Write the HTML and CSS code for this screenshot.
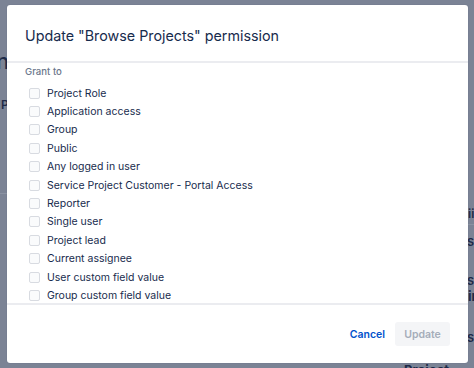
FILE: index.html
```html
<!DOCTYPE html>
<html lang="en">
<head>
<meta charset="utf-8">
<title>Update permission</title>
<link rel="stylesheet" href="styles.css">
</head>
<body>
<div class="backdrop">
  <span class="bg-text bg-n">n</span>
  <span class="bg-text bg-p">P</span>
  <span class="bg-text bg-r1">ii</span>
  <span class="bg-text bg-r2">s</span>
  <span class="bg-text bg-r3">s</span>
  <span class="bg-text bg-r4">in</span>
  <span class="bg-text bg-r5">s</span>
  <span class="bg-text bg-role">Project Role</span>
  <span class="bg-line bg-line-l"></span>
  <span class="bg-line bg-line-r"></span>
</div>
<div class="modal">
  <header class="modal-header">
    <h1 class="modal-title">Update "Browse Projects" permission</h1>
  </header>
  <div class="modal-body">
    <div class="group-label">Grant to</div>
    <ul class="options">
      <li class="option"><span class="checkbox"></span><span>Project Role</span></li>
      <li class="option"><span class="checkbox"></span><span>Application access</span></li>
      <li class="option"><span class="checkbox"></span><span>Group</span></li>
      <li class="option"><span class="checkbox"></span><span>Public</span></li>
      <li class="option"><span class="checkbox"></span><span>Any logged in user</span></li>
      <li class="option"><span class="checkbox"></span><span>Service Project Customer - Portal Access</span></li>
      <li class="option"><span class="checkbox"></span><span>Reporter</span></li>
      <li class="option"><span class="checkbox"></span><span>Single user</span></li>
      <li class="option"><span class="checkbox"></span><span>Project lead</span></li>
      <li class="option"><span class="checkbox"></span><span>Current assignee</span></li>
      <li class="option"><span class="checkbox"></span><span>User custom field value</span></li>
      <li class="option"><span class="checkbox"></span><span>Group custom field value</span></li>
      <li class="option"><span class="checkbox"></span><span>Project role</span></li>
    </ul>
  </div>
  <footer class="modal-footer">
    <button class="btn btn-link">Cancel</button>
    <button class="btn btn-disabled" disabled>Update</button>
  </footer>
</div>
</body>
</html>
```
FILE: styles.css
```css
* { box-sizing: border-box; }
html, body {
  margin: 0;
  height: 368px;
  overflow: hidden;
}
body {
  background: #7b8395;
  font-family: "Inter", "Noto Sans", sans-serif;
  color: #172b4d;
  position: relative;
}
.backdrop {
  position: absolute;
  inset: 0;
  overflow: hidden;
}
.bg-text {
  position: absolute;
  color: #1e2a48;
  font-weight: 600;
  font-size: 13px;
  line-height: 1;
}
.bg-n { left: -4px; top: 50px; font-size: 22px; font-weight: 500; }
.bg-p { left: 1px; top: 99px; font-size: 12px; }
.bg-r1 { left: 468px; top: 208px; font-size: 12px; }
.bg-r2 { left: 467px; top: 235px; }
.bg-r3 { left: 467px; top: 274px; }
.bg-r4 { left: 468px; top: 290px; font-weight: 700; }
.bg-r5 { left: 467px; top: 331px; }
.bg-role { left: 404px; top: 364px; font-size: 13px; font-weight: 700; }
.bg-line { position: absolute; height: 1px; background: #8a92a2; }
.bg-line-l { left: 0; width: 7px; top: 193px; }
.bg-line-r { left: 468px; width: 6px; top: 224px; }

.modal {
  position: absolute;
  left: 7px;
  top: 5px;
  width: 461px;
  height: 358px;
  background: #fff;
  border-radius: 3px;
  display: flex;
  flex-direction: column;
  box-shadow: 0 0 1px rgba(9,30,66,0.3);
}
.modal-header {
  height: 58px;
  padding: 0 18px;
  display: flex;
  align-items: center;
  border-bottom: 2px solid #ebecf0;
  flex: none;
}
.modal-title {
  margin: 4px 0 0;
  font-size: 14.3px;
  font-weight: 400;
  color: #172b4d;
}
.modal-body {
  flex: 1;
  overflow: hidden;
  padding: 2px 18px 0;
}
.group-label {
  font-size: 9.6px;
  font-weight: 500;
  color: #6b778c;
  line-height: 13px;
  margin-bottom: 6px;
}
.options {
  list-style: none;
  margin: 0;
  padding: 0;
}
.option {
  display: flex;
  align-items: center;
  height: 18.4px;
  font-size: 10.5px;
  color: #172b4d;
}
.checkbox {
  width: 11px;
  height: 11px;
  border: 1.5px solid #d8dbe1;
  border-radius: 2px;
  background: #fafbfc;
  margin: 0 7px 0 4px;
  flex: none;
}
.modal-footer {
  height: 60px;
  border-top: 2px solid #ebecf0;
  flex: none;
  display: flex;
  justify-content: flex-end;
  align-items: center;
  gap: 2px;
  padding: 0 18px 0 0;
}
.btn {
  font-family: inherit;
  font-size: 10.5px;
  font-weight: 600;
  border: 0;
  border-radius: 3px;
  height: 24px;
  padding: 0 8px;
  background: transparent;
}
.btn-link { color: #0052cc; }
.btn-disabled {
  background: #f4f5f7;
  color: #a5adba;
  width: 55px;
}
```
